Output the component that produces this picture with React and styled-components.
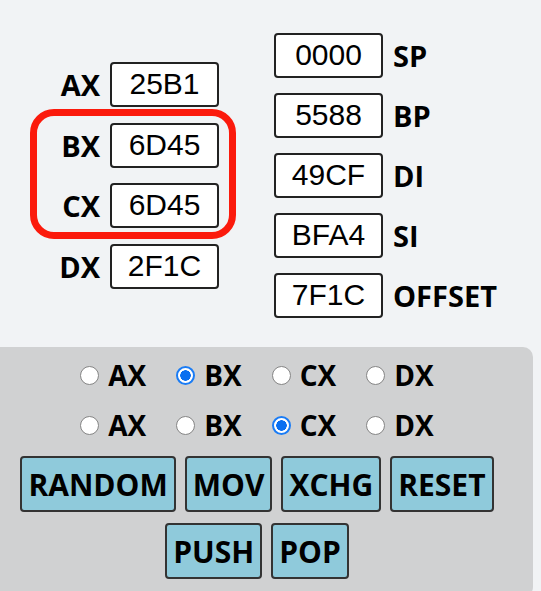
import styled, { createGlobalStyle } from 'styled-components';

const GlobalStyle = createGlobalStyle`
    html, body {
        margin: 0;
        padding: 0;
        background: #f1f3f5;
    }
    body {
        font-family: "Open Sans", "Noto Sans", sans-serif;
        width: 541px;
        height: 591px;
        overflow: hidden;
    }
`;

const leftRegs = [
    { name: 'AX', value: '25B1' },
    { name: 'BX', value: '6D45' },
    { name: 'CX', value: '6D45' },
    { name: 'DX', value: '2F1C' },
];

const rightRegs = [
    { name: 'SP', value: '0000' },
    { name: 'BP', value: '5588' },
    { name: 'DI', value: '49CF' },
    { name: 'SI', value: 'BFA4' },
    { name: 'OFFSET', value: '7F1C' },
];

const names = ['AX', 'BX', 'CX', 'DX'];

function Reg({ reg, side }) {
    return (
        <Row $side={side}>
            <Label $side={side}>{reg.name}</Label>
            <Value>{reg.value}</Value>
        </Row>
    );
}

function RadioGroup({ group, checked }) {
    return (
        <RadioRow>
            {names.map(n => (
                <RadioItem key={n}>
                    <Radio type='radio' name={group} defaultChecked={n === checked} />
                    <span>{n}</span>
                </RadioItem>
            ))}
        </RadioRow>
    );
}

export default function App() {
    return (
        <>
            <GlobalStyle />
            <Registers>
                <Column>
                    <Reg reg={leftRegs[0]} side='left' />
                    <Highlight>
                        <Reg reg={leftRegs[1]} side='left' />
                        <Reg reg={leftRegs[2]} side='left' />
                    </Highlight>
                    <Reg reg={leftRegs[3]} side='left' />
                </Column>
                <Column $gap={15}>
                    {rightRegs.map(r => <Reg key={r.name} reg={r} side='right' />)}
                </Column>
            </Registers>
            <Panel>
                <RadioGroup group='src' checked='BX' />
                <RadioGroup group='dst' checked='CX' />
                <Buttons>
                    <Button>RANDOM</Button>
                    <Button>MOV</Button>
                    <Button>XCHG</Button>
                    <Button>RESET</Button>
                </Buttons>
                <Buttons>
                    <Button>PUSH</Button>
                    <Button>POP</Button>
                </Buttons>
            </Panel>
        </>
    );
}

const Registers = styled.div`
    height: 347px;
    box-sizing: border-box;
    display: flex;
    align-items: center;
    gap: 55px;
    padding: 3px 0 0 48px;
`;

const Column = styled.div`
    display: flex;
    flex-direction: column;
    gap: ${p => p.$gap ?? 16}px;
`;

const Highlight = styled.div`
    display: flex;
    flex-direction: column;
    gap: 15px;
    margin: -14px -17px -11px -18px;
    padding: 7px 10px 4px 11px;
    border: 7px solid #fb1a0c;
    border-radius: 24px;
`;

const Row = styled.div`
    display: flex;
    align-items: center;
    flex-direction: ${p => (p.$side === 'right' ? 'row-reverse' : 'row')};
    justify-content: flex-end;
    gap: 10px;
`;

const Label = styled.div`
    width: ${p => (p.$side === 'right' ? 'auto' : '52px')};
    text-align: ${p => (p.$side === 'right' ? 'left' : 'right')};
    font-size: 29px;
    font-weight: 700;
    color: #000;
`;

const Value = styled.div`
    width: 109px;
    height: 45px;
    box-sizing: border-box;
    display: flex;
    align-items: center;
    justify-content: center;
    background: #fff;
    border: 2px solid #222;
    border-radius: 4px;
    font-family: "Liberation Sans", Arial, sans-serif;
    font-size: 30px;
    color: #000;
`;

const Panel = styled.div`
    width: 533px;
    height: 250px;
    box-sizing: border-box;
    display: flex;
    flex-direction: column;
    align-items: center;
    padding: 8px 19px 9px 0;
    background: #d0d1d2;
    border-radius: 0 10px 10px 0;
`;

const RadioRow = styled.div`
    height: 40px;
    display: flex;
    align-items: center;
    gap: 30px;
    & + & {
        margin-top: 10px;
    }
`;

const RadioItem = styled.label`
    display: flex;
    align-items: center;
    gap: 9px;
    font-size: 28px;
    font-weight: 700;
    color: #000;
`;

const Radio = styled.input`
    appearance: none;
    flex: none;
    display: block;
    width: 19px;
    height: 19px;
    min-width: 19px;
    margin: 0;
    box-sizing: border-box;
    border: 1px solid #858585;
    border-radius: 50%;
    background: #fff;
    &:checked {
        border: 2px solid #1a7cf5;
        background: radial-gradient(circle, #0a6ff0 0 5px, #fff 5.5px);
    }
`;

const Buttons = styled.div`
    display: flex;
    gap: 9px;
    margin-top: 11px;
    &:nth-of-type(1) {
        margin-top: 18px;
    }
`;

const Button = styled.button`
    height: 56px;
    padding: 0 6px;
    background: #8fcadb;
    border: 2px solid #333;
    border-radius: 4px;
    font-family: "Open Sans", "Noto Sans", sans-serif;
    font-size: 30px;
    font-weight: 700;
    color: #000;
    cursor: pointer;
`;
